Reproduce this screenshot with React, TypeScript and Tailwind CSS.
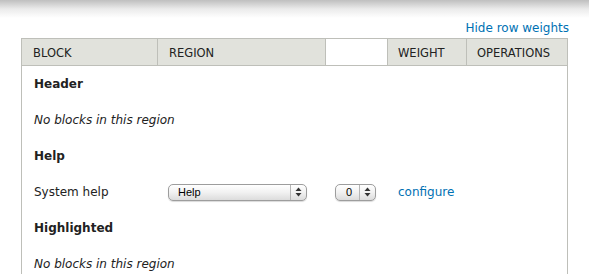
import React from 'react';

const font = { fontFamily: '"DejaVu Sans", Verdana, sans-serif' };

const Arrows: React.FC = () => (
  <svg width="7" height="10" viewBox="0 0 7 10" className="block">
    <path d="M3.5 0.5 L6.5 4 L0.5 4 Z" fill="#333" />
    <path d="M3.5 9.5 L6.5 6 L0.5 6 Z" fill="#333" />
  </svg>
);

const MacSelect: React.FC<{ label: string; width: string; labelPad: string }> = ({ label, width, labelPad }) => (
  <div
    className={`flex items-stretch h-[17px] ${width} rounded-[5px] border border-[#9d9d9d] bg-gradient-to-b from-[#ffffff] via-[#f1f1f1] to-[#dcdcdc] shadow-[0_1px_1px_rgba(0,0,0,0.15)]`}
  >
    <span className={`flex-1 text-[11px] leading-[15px] text-black ${labelPad}`} style={{ fontFamily: '"Liberation Sans", Arial, sans-serif' }}>
      {label}
    </span>
    <span className="w-[16px] border-l border-[#b5b5b5] flex items-center justify-center">
      <Arrows />
    </span>
  </div>
);

const RegionRow: React.FC<{ title: string }> = ({ title }) => (
  <div className="h-[36px] flex items-center pl-[12px] text-[12px] font-bold text-[#222]">{title}</div>
);

const EmptyRow: React.FC = () => (
  <div className="h-[36px] flex items-center pl-[12px] text-[12px] italic text-[#222]">No blocks in this region</div>
);

export default function App() {
  return (
    <div className="w-[589px] h-[274px] overflow-hidden bg-white relative" style={font}>
      <div className="absolute top-0 left-0 right-0 h-[18px] bg-gradient-to-b from-[#bfbfbf] via-[#ebebeb] to-white" />
      <div className="relative pt-[20px] pl-[21px] pr-[21px]">
        <div className="flex justify-end mr-[-1px] h-[18px]">
          <a className="text-[12px] leading-[16px] text-[#0071b3]">Hide row weights</a>
        </div>
        <div className="border border-[#bebfb9]">
          <div className="flex h-[27px] text-[11.5px] uppercase text-[#222] border-b border-[#bebfb9]">
            <div className="w-[136px] bg-[#e1e2dc] border-r border-[#bebfb9] flex items-center pt-[3px] pl-[11px]">Block</div>
            <div className="w-[168px] bg-[#e1e2dc] border-r border-[#bebfb9] flex items-center pt-[3px] pl-[11px]">Region</div>
            <div className="w-[62px] bg-white border-r border-[#bebfb9]" />
            <div className="w-[79px] bg-[#e1e2dc] border-r border-[#bebfb9] flex items-center pt-[3px] pl-[10px]">Weight</div>
            <div className="flex-1 bg-[#e1e2dc] flex items-center pt-[3px] pl-[10px]">Operations</div>
          </div>
          <RegionRow title="Header" />
          <EmptyRow />
          <RegionRow title="Help" />
          <div className="h-[36px] flex items-center text-[12px] text-[#222]">
            <div className="w-[136px] pl-[12px]">System help</div>
            <div className="w-[168px] pl-[10px]">
              <MacSelect label="Help" width="w-[139px]" labelPad="pl-[9px]" />
            </div>
            <div className="w-[62px] pl-[9px]">
              <MacSelect label="0" width="w-[41px]" labelPad="pl-[10px]" />
            </div>
            <div className="pl-[10px] text-[#0071b3]">configure</div>
          </div>
          <RegionRow title="Highlighted" />
          <EmptyRow />
        </div>
      </div>
    </div>
  );
}
